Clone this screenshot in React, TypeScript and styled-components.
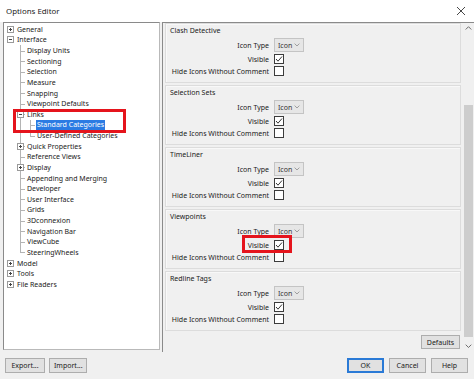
import { FC } from 'react';
import styled, { createGlobalStyle } from 'styled-components';

const GlobalStyle = createGlobalStyle`
  html, body {
    margin: 0;
    padding: 0;
    background: #f0f0f0;
  }
  body {
    font-family: "Noto Sans", "Open Sans", sans-serif;
    font-size: 7px;
    color: #1a1a1a;
  }
`;

const Window = styled.div`
  width: 474px;
  height: 379px;
  display: flex;
  flex-direction: column;
  background: #f0f0f0;
  overflow: hidden;
`;

const TitleBar = styled.div`
  height: 22px;
  flex: none;
  display: flex;
  align-items: center;
  justify-content: space-between;
  padding: 0 6px;
  background: #ffffff;
  font-size: 7.9px;
`;

const CloseButton = styled.span`
  display: flex;
  width: 10px;
  height: 10px;
  margin-right: 2px;
`;

const Main = styled.div`
  height: 330px;
  flex: none;
  display: flex;
  gap: 2px;
  padding-left: 3px;
`;

const TreePanel = styled.div`
  position: relative;
  width: 157px;
  height: 328px;
  box-sizing: border-box;
  background: #ffffff;
  border: 1px solid #b9b9b9;
  border-top-color: #8a8a8a;
  border-left-color: #8a8a8a;
  padding-top: 1px;
`;

const TreeRow = styled.div`
  height: 10.625px;
  display: flex;
  align-items: stretch;
  padding-left: 1px;
  white-space: nowrap;
`;

type CellKind = 'none' | 'pipe' | 'tee' | 'ell' | 'plus' | 'minus' | 'teePlus' | 'teeMinus';

const Cell = styled.span<{ $kind: CellKind }>`
  position: relative;
  width: 10px;
  flex: none;
  display: flex;
  align-items: center;
  justify-content: center;

  &::before {
    content: '';
    display: ${(p) => (['pipe', 'tee', 'ell', 'teePlus', 'teeMinus'].includes(p.$kind) ? 'block' : 'none')};
    position: absolute;
    left: 5px;
    top: 0;
    bottom: ${(p) => (p.$kind === 'ell' ? '50%' : '0')};
    width: 1px;
    background: #b4b4b4;
  }

  &::after {
    content: '';
    display: ${(p) => (['tee', 'ell', 'teePlus', 'teeMinus'].includes(p.$kind) ? 'block' : 'none')};
    position: absolute;
    left: 5px;
    right: 0;
    top: 50%;
    height: 1px;
    background: #b4b4b4;
  }
`;

const ExpanderBox = styled.svg`
  position: relative;
  z-index: 1;
  width: 7px;
  height: 7px;
  margin-left: 1px;
`;

const NodeLabel = styled.span<{ $selected?: boolean }>`
  display: flex;
  align-items: center;
  margin-left: 1px;
  padding: 0 1px;
  background: ${(p) => (p.$selected ? '#2b7be3' : 'transparent')};
  color: ${(p) => (p.$selected ? '#ffffff' : 'inherit')};
`;

const Callout = styled.div<{ $left: number; $top: number; $w: number; $h: number }>`
  position: absolute;
  left: ${(p) => p.$left}px;
  top: ${(p) => p.$top}px;
  width: ${(p) => p.$w}px;
  height: ${(p) => p.$h}px;
  box-sizing: border-box;
  border: 3px solid #e5141c;
  pointer-events: none;
  z-index: 2;
`;

const SettingsPanel = styled.div`
  flex: 1;
  display: flex;
  box-sizing: border-box;
  border-top: 1px solid #8a8a8a;
  border-left: 1px solid #8a8a8a;
`;

const SettingsContent = styled.div`
  flex: 1;
  display: flex;
  flex-direction: column;
  padding: 0 2px 3px 2px;
`;

const Group = styled.div`
  position: relative;
  height: 60px;
  box-sizing: border-box;
  margin-bottom: 2px;
  border: 1px solid #dcdcdc;
  box-shadow: inset 1px 1px 0 #f8f8f8;
  padding: 1px 0 0 0;
`;

const GroupHeader = styled.div`
  height: 12px;
  line-height: 12px;
  padding-left: 4px;
`;

const FieldGrid = styled.div`
  display: grid;
  grid-template-columns: 103px auto;
  column-gap: 5px;
  align-items: center;
`;

const FieldLabel = styled.span`
  justify-self: end;
  white-space: nowrap;
`;

const ComboBox = styled.div`
  width: 30px;
  height: 14px;
  margin: 1px 0;
  box-sizing: border-box;
  display: flex;
  align-items: center;
  justify-content: space-between;
  padding: 0 3px;
  background: #e6e6e6;
  border: 1px solid #c4c4c4;
  color: #333;
`;

const CheckBox = styled.span`
  width: 10px;
  height: 10px;
  margin: 1px 0;
  box-sizing: border-box;
  display: flex;
  align-items: center;
  justify-content: center;
  background: #ffffff;
  border: 1px solid #3c3c3c;
`;

const Spacer = styled.div`
  flex: 1;
`;

const DefaultsRow = styled.div`
  display: flex;
  justify-content: flex-end;
  padding-right: 1px;
`;

const Button = styled.button<{ $primary?: boolean; $width?: number }>`
  height: 14px;
  width: ${(p) => (p.$width ? `${p.$width}px` : 'auto')};
  padding: 0 4px;
  font: inherit;
  color: #1a1a1a;
  background: #e1e1e1;
  border: 1px solid ${(p) => (p.$primary ? '#2a7ad6' : '#adadad')};
  box-shadow: ${(p) => (p.$primary ? 'inset 0 0 0 1px #2a7ad6' : 'none')};
  cursor: pointer;
`;

const ScrollBar = styled.div`
  width: 11px;
  flex: none;
  display: flex;
  flex-direction: column;
  align-items: center;
  background: #f0f0f0;
`;

const ScrollArrow = styled.div`
  height: 11px;
  flex: none;
  display: flex;
  align-items: center;
  justify-content: center;
`;

const ScrollTrack = styled.div`
  flex: 1;
  width: 9px;
`;

const ScrollThumb = styled.div`
  margin-top: 71px;
  height: 232px;
  background: #cdcdcd;
`;

const Footer = styled.div`
  flex: 1;
  display: flex;
  align-items: center;
  justify-content: space-between;
  padding: 0 6px 1px 5px;
`;

const ButtonGroup = styled.div<{ $gap: number }>`
  display: flex;
  gap: ${(p) => p.$gap}px;
`;

const FooterButton = styled(Button)`
  height: 15px;
`;

interface TreeItem {
  label: string;
  cells: CellKind[];
  selected?: boolean;
}

const leaf = (label: string): TreeItem => ({ label, cells: ['none', 'tee'] });

const treeItems: TreeItem[] = [
  { label: 'General', cells: ['plus'] },
  { label: 'Interface', cells: ['minus'] },
  leaf('Display Units'),
  leaf('Sectioning'),
  leaf('Selection'),
  leaf('Measure'),
  leaf('Snapping'),
  leaf('Viewpoint Defaults'),
  { label: 'Links', cells: ['none', 'teeMinus'] },
  { label: 'Standard Categories', cells: ['none', 'pipe', 'tee'], selected: true },
  { label: 'User-Defined Categories', cells: ['none', 'pipe', 'ell'] },
  { label: 'Quick Properties', cells: ['none', 'teePlus'] },
  leaf('Reference Views'),
  { label: 'Display', cells: ['none', 'teePlus'] },
  leaf('Appending and Merging'),
  leaf('Developer'),
  leaf('User Interface'),
  leaf('Grids'),
  leaf('3Dconnexion'),
  leaf('Navigation Bar'),
  leaf('ViewCube'),
  { label: 'SteeringWheels', cells: ['none', 'ell'] },
  { label: 'Model', cells: ['plus'] },
  { label: 'Tools', cells: ['plus'] },
  { label: 'File Readers', cells: ['plus'] },
];

const groups = ['Clash Detective', 'Selection Sets', 'TimeLiner', 'Viewpoints', 'Redline Tags'];

const Expander: FC<{ open: boolean }> = ({ open }) => (
  <ExpanderBox viewBox="0 0 7 7">
    <rect x="0.5" y="0.5" width="6" height="6" fill="#fff" stroke="#9a9a9a" />
    <line x1="2" y1="3.5" x2="5" y2="3.5" stroke="#444" />
    {!open && <line x1="3.5" y1="2" x2="3.5" y2="5" stroke="#444" />}
  </ExpanderBox>
);

const TreeCell: FC<{ kind: CellKind }> = ({ kind }) => (
  <Cell $kind={kind}>
    {(kind === 'plus' || kind === 'teePlus') && <Expander open={false} />}
    {(kind === 'minus' || kind === 'teeMinus') && <Expander open />}
  </Cell>
);

const Check: FC = () => (
  <svg width="8" height="8" viewBox="0 0 8 8">
    <polyline points="1,4 3,6.2 7,1.5" fill="none" stroke="#333" strokeWidth="1" />
  </svg>
);

const Chevron: FC<{ up?: boolean; size?: number; color?: string }> = ({ up, size = 6, color = '#777' }) => (
  <svg width={size} height={size * 0.6} viewBox="0 0 10 6">
    <polyline
      points={up ? '1,5 5,1 9,5' : '1,1 5,5 9,1'}
      fill="none"
      stroke={color}
      strokeWidth="1.3"
    />
  </svg>
);

const SettingsGroup: FC<{ title: string; highlight?: boolean }> = ({ title, highlight }) => (
  <Group>
    <GroupHeader>{title}</GroupHeader>
    <FieldGrid>
      <FieldLabel>Icon Type</FieldLabel>
      <ComboBox>
        <span>Icon</span>
        <Chevron size={6} color="#888" />
      </ComboBox>
      <FieldLabel>Visible</FieldLabel>
      <CheckBox>
        <Check />
      </CheckBox>
      <FieldLabel>Hide Icons Without Comment</FieldLabel>
      <CheckBox />
    </FieldGrid>
    {highlight && <Callout $left={76} $top={25} $w={50} $h={18} />}
  </Group>
);

export default function App() {
  return (
    <Window>
      <GlobalStyle />
      <TitleBar>
        <span>Options Editor</span>
        <CloseButton>
          <svg width="10" height="10" viewBox="0 0 10 10">
            <path d="M1 1 L9 9 M9 1 L1 9" stroke="#333" strokeWidth="0.9" />
          </svg>
        </CloseButton>
      </TitleBar>
      <Main>
        <TreePanel>
          {treeItems.map((item) => (
            <TreeRow key={item.label}>
              {item.cells.map((kind, i) => (
                <TreeCell key={i} kind={kind} />
              ))}
              <NodeLabel $selected={item.selected}>{item.label}</NodeLabel>
            </TreeRow>
          ))}
          <Callout $left={9} $top={86} $w={113} $h={24} />
        </TreePanel>
        <SettingsPanel>
          <SettingsContent>
            {groups.map((g) => (
              <SettingsGroup key={g} title={g} highlight={g === 'Viewpoints'} />
            ))}
            <Spacer />
            <DefaultsRow>
              <Button $width={39}>Defaults</Button>
            </DefaultsRow>
          </SettingsContent>
          <ScrollBar>
            <ScrollArrow>
              <Chevron up size={7} color="#606060" />
            </ScrollArrow>
            <ScrollTrack>
              <ScrollThumb />
            </ScrollTrack>
            <ScrollArrow>
              <Chevron size={7} color="#606060" />
            </ScrollArrow>
          </ScrollBar>
        </SettingsPanel>
      </Main>
      <Footer>
        <ButtonGroup $gap={4}>
          <FooterButton $width={40}>Export...</FooterButton>
          <FooterButton $width={38}>Import...</FooterButton>
        </ButtonGroup>
        <ButtonGroup $gap={5}>
          <FooterButton $primary $width={37}>OK</FooterButton>
          <FooterButton $width={37}>Cancel</FooterButton>
          <FooterButton $width={37}>Help</FooterButton>
        </ButtonGroup>
      </Footer>
    </Window>
  );
}
